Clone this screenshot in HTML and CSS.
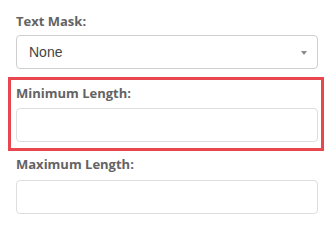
FILE: index.html
```html
<!DOCTYPE html>
<html>
<head>
<meta charset="utf-8">
<link rel="stylesheet" href="styles.css">
</head>
<body>
<div class="form">
  <div class="group">
    <label class="label">Text Mask:</label>
    <div class="select">
      <span class="select-value">None</span>
      <svg class="arrow" width="6" height="4" viewBox="0 0 6 4"><path d="M0 0H6L3 4Z" fill="#8a8a8a"/></svg>
    </div>
  </div>
  <div class="group highlight">
    <label class="label">Minimum Length:</label>
    <div class="input"></div>
  </div>
  <div class="group last">
    <label class="label">Maximum Length:</label>
    <div class="input"></div>
  </div>
</div>
</body>
</html>
```
FILE: styles.css
```css
html, body {
  margin: 0;
  background: #ffffff;
}
.form {
  padding: 12px 7px 0 8px;
}
.group {
  padding: 0 6px 0 8px;
  margin-bottom: 8px;
}
.group.highlight {
  border: 3px solid #e8474f;
  padding: 3.5px 3px 6px 5px;
  margin-bottom: 4px;
}
.label {
  display: block;
  font-family: "Open Sans", sans-serif;
  font-weight: 700;
  font-size: 13px;
  line-height: 18px;
  color: #636363;
}
.select {
  margin-top: 5px;
  height: 34px;
  box-sizing: border-box;
  border: 1px solid #cfcfcf;
  border-radius: 4px;
  display: flex;
  align-items: center;
  justify-content: space-between;
  padding: 0 10px 0 12px;
}
.select-value {
  font-family: "Liberation Sans", Arial, sans-serif;
  font-size: 14px;
  color: #444444;
}
.arrow {
  display: block;
  margin-top: 1px;
}
.input {
  margin-top: 6.5px;
  height: 34px;
  box-sizing: border-box;
  border: 1px solid #dedede;
  border-radius: 4px;
  background: #ffffff;
}
```
